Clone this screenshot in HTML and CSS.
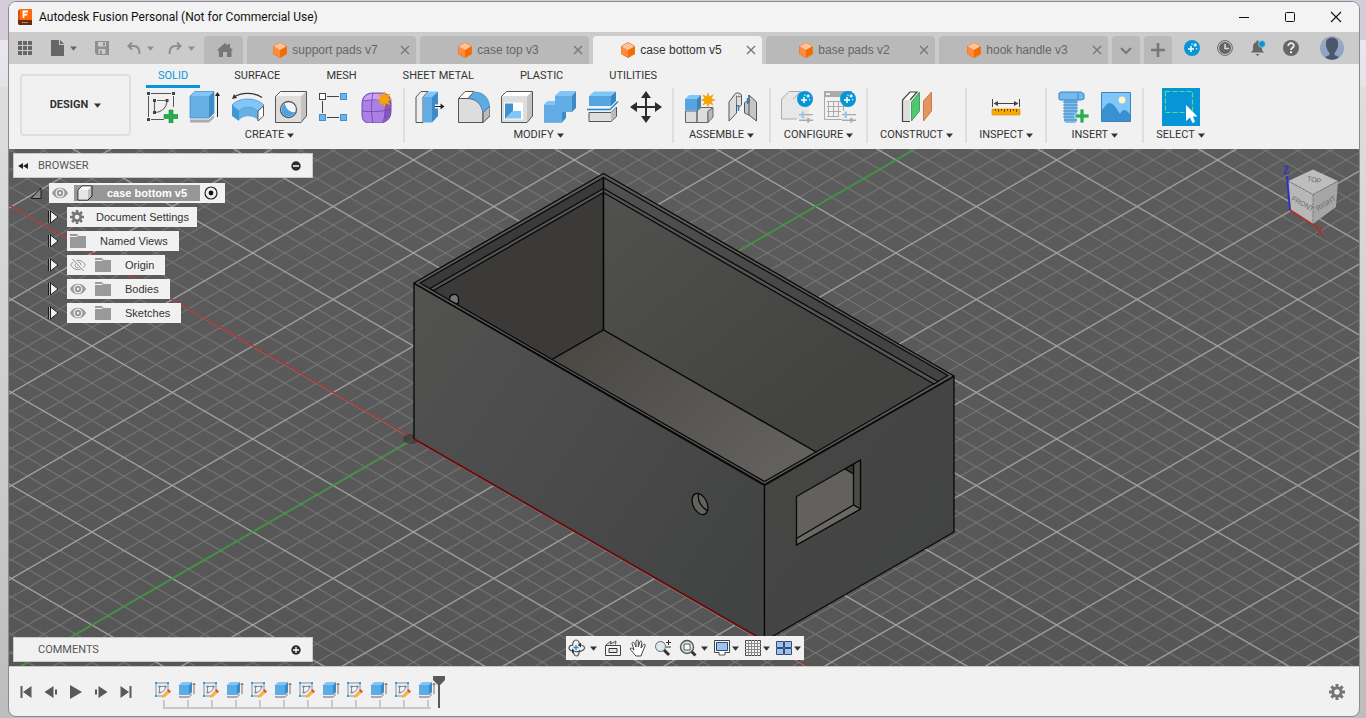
FILE: index.html
```html
<!DOCTYPE html>
<html lang="en">
<head>
<meta charset="utf-8">
<title>Autodesk Fusion Personal</title>
<link rel="stylesheet" href="styles.css">
</head>
<body>
<svg class="defs" aria-hidden="true">
  <symbol id="cube" viewBox="0 0 14 16"><path d="M7 0 14 4 7 8 0 4Z" fill="#ffc49b"/><path d="M0 4 7 8V16L0 12Z" fill="#ff8b3d"/><path d="M14 4 7 8V16L14 12Z" fill="#f76a00"/><path d="M7 .5 13.6 4.2V11.8L7 15.5.4 11.8V4.2Z" fill="none" stroke="#e77a33" stroke-width=".7"/></symbol>
  <symbol id="close" viewBox="0 0 10 10"><path d="M1 1 9 9M9 1 1 9" stroke="currentColor" stroke-width="1.4" fill="none"/></symbol>
  <symbol id="caret" viewBox="0 0 7 5"><path d="M0 .5H7L3.500 4.800Z" fill="currentColor"/></symbol>
  <symbol id="eye" viewBox="0 0 16 12"><path d="M0 6C3-1 13-1 16 6 13 13 3 13 0 6Z" fill="#999"/><circle cx="8" cy="6" r="4.500" fill="#f1f1f1"/><circle cx="8" cy="6" r="3.200" fill="#999"/><circle cx="8" cy="6" r="1.200" fill="#f1f1f1"/></symbol>
  <symbol id="eye-off" viewBox="0 0 16 12"><path d="M.7 6C4-.3 12-.3 15.300 6 12 12.300 4 12.300.7 6Z" fill="none" stroke="#999"/><circle cx="8" cy="6" r="3" fill="none" stroke="#999"/><path d="M3 0 14 12" stroke="#f1f1f1" stroke-width="3"/><path d="M2.500 0 13.500 12" stroke="#888"/></symbol>
  <symbol id="folder" viewBox="0 0 16 14"><path d="M0 0H7L9 2H16V14H0Z" fill="#999"/><path d="M0 2.500H7L8 1.200" stroke="#f1f1f1" fill="none"/></symbol>
  <symbol id="gear" viewBox="0 0 16 16"><g fill="currentColor"><path d="M6.500 0h3v16h-3zM0 6.500h16v3H0z"/><path d="M6.500 0h3v16h-3zM0 6.500h16v3H0z" transform="rotate(45 8 8)"/><circle cx="8" cy="8" r="5.600"/></g><circle cx="8" cy="8" r="2.700" fill="#f1f1f1"/></symbol>
  <symbol id="branch" viewBox="0 0 11 14"><path d="M.5 1V13" stroke="#1a1a1a"/><path d="M1 1H3L10 7 3 13H1Z" fill="#aaa"/><path d="M2.500 1 10 7 2.500 13Z" fill="#f1f1f1" stroke="#1a1a1a"/></symbol>
  <symbol id="t-sketch" viewBox="0 0 18 18"><path d="M2 2H14V13M2 2V15H9" fill="none" stroke="#8a8a8a"/><path d="M5.500 11V5.500H11.500C11.500 9 9 11.500 5.500 11.500" fill="none" stroke="#8a8a8a"/><path d="M1 1h2v2H1zM13 1h2v2h-2zM1 14h2v2H1zM4.500 4.500h2v2h-2zM10.500 4.500h2v2h-2zM4.500 10.500h2v2h-2z" fill="#3d96d8"/><path d="M8 17 9 13.500 13 9.500 15.500 12 11 16Z" fill="#f4b740"/><path d="M13 9.500 14.500 8 17 10.500 15.500 12Z" fill="#ef4848"/></symbol>
  <symbol id="t-extrude" viewBox="0 0 18 18"><path d="M1 4 4 1H14L11 4Z" fill="#80c6fa"/><path d="M1 4H11V14H1Z" fill="#5aabe6"/><path d="M11 4 14 1V11L11 14Z" fill="#3f89c2"/><path d="M1 15H11L14 12V14L11 17H1Z" fill="#aaa"/><path d="M16 3V13M14.700 4 16 2 17.300 4" stroke="#555" stroke-width=".8" fill="none"/></symbol>
  <symbol id="spark" viewBox="0 0 18 18"><path d="M9 0 10.600 5 15.400 2.600 13 7.400 18 9 13 10.600 15.400 15.400 10.600 13 9 18 7.400 13 2.600 15.400 5 10.600 0 9 5 7.400 2.600 2.600 7.400 5Z" fill="#f6a200"/></symbol>
  <symbol id="badge" viewBox="0 0 16 16"><circle cx="8" cy="8" r="8" fill="#0696d7"/><path d="M4 9H10M7 6V12M11.200 3.500V6.500M9.700 5H12.700" stroke="#fff" stroke-width="1.500"/><path d="M7.400 3.500h1.200v1.200H7.400zM12 8h1.200v1.200H12z" fill="#fff"/></symbol>
  <symbol id="sliders" viewBox="0 0 15 12"><path d="M0 3.500H15M0 9.500H15" stroke="#aaa" stroke-width="1.500"/><path d="M4 0V7" stroke="#8ccaf5" stroke-width="2.500"/><path d="M10 7V12" stroke="#aaa" stroke-width="2.500"/></symbol>
</svg>

<div class="window">
  <header class="title-bar">
    <svg class="app-icon" viewBox="0 0 14 16"><path d="M2 0H14V16H2L0 14V2Z" fill="#ff6b0a"/><path d="M0 2 2 0V11H0Z" fill="#d84f00"/><path d="M0 11H14V16H1L0 15Z" fill="#682b10"/><path d="M5.500 9V2.500H10M5.500 5.700H9.300" fill="none" stroke="#fff" stroke-width="1.800"/><path d="M4 13.500H10" stroke="#d9a994" stroke-dasharray="1.500 .6"/></svg>
    <h1>Autodesk Fusion Personal (Not for Commercial Use)</h1>
    <div class="win-controls">
      <button aria-label="Minimize"><svg viewBox="0 0 12 12"><path d="M1 6.500H11" stroke="#111"/></svg></button>
      <button aria-label="Maximize"><svg viewBox="0 0 12 12"><rect x="1.500" y="1.500" width="9" height="9" rx="1" fill="none" stroke="#111"/></svg></button>
      <button aria-label="Close"><svg viewBox="0 0 12 12"><path d="M1 1 11 11M11 1 1 11" stroke="#111" stroke-width="1.100"/></svg></button>
    </div>
  </header>

  <div class="app-bar">
    <div class="quick">
      <button aria-label="Data panel"><svg class="i14" viewBox="0 0 14 14"><path d="M0 0h4v4H0zM5 0h4v4H5zM10 0h4v4h-4zM0 5h4v4H0zM5 5h4v4H5zM10 5h4v4h-4zM0 10h4v4H0zM5 10h4v4H5zM10 10h4v4h-4z" fill="#666"/></svg></button>
      <button aria-label="File"><svg class="i16" viewBox="0 0 16 16"><path d="M1 0H9V5H14V16H1ZM10 0 14 4H10Z" fill="#666"/></svg><svg class="caret"><use href="#caret"/></svg></button>
      <button class="faded" aria-label="Save"><svg class="i14" viewBox="0 0 14 14"><path d="M0 0H14V14H2L0 12Z" fill="#8e8e8e"/><path d="M3 1H11V5.500H3ZM3.500 8H10.500V13H3.500Z" fill="#cbcbcb"/><path d="M8 1.500h2v3H8zM5 9.500h2V13H5z" fill="#8e8e8e"/></svg></button>
      <div class="history">
        <button class="faded" aria-label="Undo"><svg class="i14" viewBox="0 0 14 14"><path d="M5 1.500 1.500 5 5 8.500M2 5H7C11 5 12.500 7.500 12.500 13" fill="none" stroke="#8e8e8e" stroke-width="2"/></svg><svg class="caret"><use href="#caret"/></svg></button>
        <button class="faded" aria-label="Redo"><svg class="i14" viewBox="0 0 14 14"><path d="M9 1.500 12.500 5 9 8.500M12 5H7C3 5 1.500 7.500 1.500 13" fill="none" stroke="#8e8e8e" stroke-width="2"/></svg><svg class="caret"><use href="#caret"/></svg></button>
      </div>
    </div>
    <nav class="docs" aria-label="Documents">
      <button class="doc small home" aria-label="Home"><svg class="i16" viewBox="0 0 16 16"><path d="M0 8 8 1 11 3.600V2H13V5.400L16 8 14.500 8.800V15H10V10H6V15H1.800V8.800Z" fill="#777"/></svg></button>
      <div class="doc"><button class="name"><svg class="cube"><use href="#cube"/></svg>support pads v7</button><button class="x" aria-label="Close support pads"><svg><use href="#close"/></svg></button></div>
      <div class="doc"><button class="name"><svg class="cube"><use href="#cube"/></svg>case top v3</button><button class="x" aria-label="Close case top"><svg><use href="#close"/></svg></button></div>
      <div class="doc current"><button class="name"><svg class="cube"><use href="#cube"/></svg>case bottom v5</button><button class="x" aria-label="Close case bottom"><svg><use href="#close"/></svg></button></div>
      <div class="doc"><button class="name"><svg class="cube"><use href="#cube"/></svg>base pads v2</button><button class="x" aria-label="Close base pads"><svg><use href="#close"/></svg></button></div>
      <div class="doc"><button class="name"><svg class="cube"><use href="#cube"/></svg>hook handle v3</button><button class="x" aria-label="Close hook handle"><svg><use href="#close"/></svg></button></div>
      <button class="doc small" aria-label="More tabs"><svg class="i14" viewBox="0 0 14 14"><path d="M2 5 7 10 12 5" fill="none" stroke="#777" stroke-width="2"/></svg></button>
      <button class="doc small" aria-label="New design"><svg class="i14" viewBox="0 0 14 14"><path d="M0 7H14M7 0V14" stroke="#777" stroke-width="2.600"/></svg></button>
    </nav>
    <div class="status">
      <button aria-label="Extensions"><svg class="i16"><use href="#badge"/></svg></button>
      <button aria-label="Job status"><svg class="i16" viewBox="0 0 16 16"><circle cx="8" cy="8" r="7.400" fill="#cbcbcb" stroke="#666"/><circle cx="8" cy="8" r="6" fill="#666"/><path d="M8 4V8.500H12" fill="none" stroke="#ddd" stroke-width="1.500"/></svg></button>
      <button aria-label="Notifications"><svg class="i16" viewBox="0 0 16 16"><path d="M6.500.5h2V2C11 2.500 12 4.500 12 7V10L14 12.500H1L3 10V7C3 4.500 4 2.500 6.500 2ZM5.500 14H9.500L7.500 16Z" fill="#666"/><circle cx="12" cy="4" r="3.400" fill="#0696d7" stroke="#cbcbcb" stroke-width=".7"/></svg></button>
      <button aria-label="Help"><svg class="i16" viewBox="0 0 16 16"><circle cx="8" cy="8" r="8" fill="#666"/><path d="M5.200 6C5.200 2 11 2.500 10.800 5.900 10.600 7.700 8 7.800 8 10" fill="none" stroke="#eee" stroke-width="1.800"/><path d="M7 11.200h2v2H7z" fill="#eee"/></svg></button>
      <button class="account" aria-label="Account"><svg class="i24" viewBox="0 0 24 24"><defs><linearGradient id="av" x2="0" y2="1"><stop stop-color="#9dabbf"/><stop offset="1" stop-color="#8ba1c6"/></linearGradient></defs><circle cx="12" cy="12" r="12" fill="url(#av)"/><path d="M6 6C7 0 17 0 18 6V11L16 15 14.500 17V19L19 21C15 24.700 9 24.700 5 21L9.500 19V17L7.500 14.500 6 10Z" fill="#4b586b"/></svg></button>
    </div>
  </div>

  <div class="ribbon">
    <button class="workspace">DESIGN<svg class="caret"><use href="#caret"/></svg></button>
    <div class="tools">
      <nav class="ribbon-tabs" aria-label="Toolbar tabs">
        <button class="on">SOLID</button><button>SURFACE</button><button>MESH</button><button>SHEET METAL</button><button>PLASTIC</button><button>UTILITIES</button>
      </nav>
      <div class="groups">
        <section class="group">
          <div class="icons">
            <button aria-label="Create sketch"><svg viewBox="0 0 32 32"><path d="M5 2.500H25M2.500 5V26M27.500 5V16M5 28.500H18" stroke="#555" fill="none"/><path d="M8.500 11V20M11 9.500H19M21 11C20 17 16 20.500 10 21.500" fill="none" stroke="#666" stroke-width="1.200"/><path d="M1 1h3v3H1zM26 1h3v3h-3zM1 27h3v3H1zM7 8h3v3H7zM19.500 8h3v3h-3zM7 20h3v3H7z" fill="#444"/><path d="M23 19h4v4.500h5v4h-5V32h-4v-4.500h-5v-4h5Z" fill="#24b04c" stroke="#168a36" stroke-width=".6"/></svg></button>
            <button aria-label="Extrude"><svg viewBox="0 0 32 32"><path d="M1 5 6 .5H25L20 5Z" fill="#80c6fa"/><path d="M1 5H20V27H1Z" fill="#67b0e5"/><path d="M20 5 25 .5V22L20 27Z" fill="#3d8bc8"/><path d="M1 5 6 .5H25V22L20 27H1Z" fill="none" stroke="#3c86be" stroke-width=".7"/><path d="M1 28.500H20L25 24V27L20 31.500H1Z" fill="#aaa"/><path d="M28.500 26V4" stroke="#222"/><path d="M26 5 28.500 1 31 5Z" fill="#222"/></svg></button>
            <button aria-label="Revolve"><svg viewBox="0 0 32 32"><path d="M2 6C9 1 22 1 30 6.500" fill="none" stroke="#333" stroke-width="1.300"/><path d="M0 8 2 3 5 7Z" fill="#333"/><path d="M0 14C7 6 24 6 32 14L26 20C20 15 12 15 7 20Z" fill="#80c6fa"/><path d="M0 14 7 20V30L0 25Z" fill="#4097d5"/><path d="M7 20C12 15 20 15 26 20V29C20 24 12 24 7 29Z" fill="#67b0e5"/><path d="M0 14C7 6 24 6 32 14L26 20C20 15 12 15 7 20Z" fill="none" stroke="#3c8fca" stroke-width=".7"/><path d="M26 20 31.500 15V25L26 30Z" fill="#fff" stroke="#555"/></svg></button>
            <button aria-label="Hole"><svg viewBox="0 0 32 32"><path d="M.5 5.500 5.500.5H31.500V25L26 31.500H.5Z" fill="#c3c3c3"/><path d="M.5 5.500 5.500.5H31L26 5.500Z" fill="#f5f5f5"/><path d="M.5 5.500H26V31.500H.5Z" fill="#ddd"/><path d="M.5 5.500 5.500.5H31.500V25L26 31.500H.5Z" fill="none" stroke="#555"/><circle cx="13.500" cy="18.500" r="8" fill="#f5f5f5" stroke="#555" stroke-width="1.300"/><path d="M10 12.500A7 7 0 1 0 20 21C15 22 10 17 10 12.500Z" fill="#4da2df"/></svg></button>
            <button aria-label="Pattern"><svg viewBox="0 0 32 32"><path d="M9 5.500H21M4.500 10V22M9 26.500H21" stroke="#444"/><rect x="1.500" y="2.500" width="6" height="6" fill="#fff" stroke="#444"/><g fill="#6bb5ee" stroke="#4391cc"><rect x="22.500" y="2.500" width="6" height="6"/><rect x="1.500" y="23.500" width="6" height="6"/><rect x="22.500" y="23.500" width="6" height="6"/></g></svg></button>
            <button aria-label="Create form"><svg viewBox="0 0 32 32"><path d="M1 13C1 5 6 2 12 2H20C27 2 30 6 30 12V20C30 28 25 32 18 32H9C3 32 1 29 1 23Z" fill="#ab80e6"/><path d="M2 10C4 4 10 2 18 2.500 24 3 26 4 24 8 19 11 7 8 2 10Z" fill="#c8a5f4"/><path d="M24 8C25 17 24 25 21 31 27 30 30 25 30 18V12C29 6 27 4 24 8Z" fill="#8558bd"/><path d="M1 20C8 21 21 21 30 18M12 2C10 9 10 24 12 32M24 7V27M2 10C10 8 20 10 25 7" fill="none" stroke="#6e42a5" stroke-width=".8"/><path d="M1 13C1 5 6 2 12 2H20C27 2 30 6 30 12V20C30 28 25 32 18 32H9C3 32 1 29 1 23Z" fill="none" stroke="#7648ae"/><use href="#spark" x="15" y="0" width="17" height="17"/></svg></button>
          </div>
          <button class="label">CREATE<svg class="caret"><use href="#caret"/></svg></button>
        </section>
        <section class="group">
          <div class="icons">
            <button aria-label="Press pull"><svg viewBox="0 0 32 32"><path d="M1 6 6 .5H13L8 6V31.500H1Z" fill="#eee" stroke="#555"/><path d="M8 6 14 .5H23L17 6Z" fill="#80c6fa"/><path d="M8 6H17V31.500H8Z" fill="#62ade4"/><path d="M17 6 23 .5V25L17 31.500Z" fill="#3d8bc8"/><path d="M20 15.500H28" stroke="#fff" stroke-width="4"/><path d="M20 15.500H28" stroke="#222"/><path d="M25.500 12.500 29.500 15.500 25.500 18.500Z" fill="#222"/></svg></button>
            <button aria-label="Fillet"><svg viewBox="0 0 32 32"><path d="M.5 7.500 7 .5H16L10 7.500Z" fill="#fff" stroke="#555"/><path d="M.5 7.500H9C19 7.500 24 14 25 21.500V31.500H.5Z" fill="#ddd" stroke="#555"/><path d="M25 21.500 32 15V25L25 31.500Z" fill="#bbb" stroke="#555"/><path d="M11 7 17 1C25 1 31 7 31.500 15L25 21.500C23 13 18 8 11 7Z" fill="#5eaae3" stroke="#3985c0" stroke-width=".6"/></svg></button>
            <button aria-label="Shell"><svg viewBox="0 0 32 32"><path d="M.5 5.500 5.500.5H31.500V25L26 31.500H.5Z" fill="#c3c3c3"/><path d="M.5 5.500 5.500.5H31L26 5.500Z" fill="#fff"/><path d="M.5 5.500H26V31.500H.5Z" fill="#ddd"/><path d="M.5 5.500 5.500.5H31.500V25L26 31.500H.5Z" fill="none" stroke="#555"/><path d="M3 11.500H22V28.500H3Z" fill="#fff"/><path d="M4 12.500H12V20L4 28Z" fill="#3f91cf"/><path d="M12 20H20V27.500H4.500Z" fill="#80c6fa"/></svg></button>
            <button aria-label="Combine"><svg viewBox="0 0 32 32"><path d="M0 14 4 10H11V5L16 .5H32V17L28 21H22V27L18 31.500H0Z" fill="#3f8ac4"/><path d="M11 5 16 .5H32L28 5ZM0 14 4 10H11V14Z" fill="#80c6fa"/><path d="M11 5H28V21H18V31.500H0V14H11Z" fill="#62ade4"/></svg></button>
            <button aria-label="Split body"><svg viewBox="0 0 32 32"><path d="M2 5 7 .5H29L24 5Z" fill="#80c6fa"/><path d="M2 5H24V15H2Z" fill="#55a4df"/><path d="M24 5 29 .5V10L24 15Z" fill="#3d84ba"/><path d="M0 18.500H23L31 10.500" stroke="#1787d5" stroke-width="1.300" fill="none"/><path d="M2 21.500H24L29.500 16V25.500L24 30.500H2Z" fill="#ddd" stroke="#555"/><path d="M24 22 29 17V25L24 30Z" fill="#bbb"/></svg></button>
            <button aria-label="Move"><svg viewBox="0 0 32 32"><path d="M16 4V28M4 16H28" stroke="#2d2d2d" stroke-width="2"/><path d="M11 7 16 0 21 7ZM11 25 16 32 21 25ZM7 11 0 16 7 21ZM25 11 32 16 25 21Z" fill="#2d2d2d"/></svg></button>
          </div>
          <button class="label">MODIFY<svg class="caret"><use href="#caret"/></svg></button>
        </section>
        <section class="group">
          <div class="icons">
            <button aria-label="New component"><svg viewBox="0 0 32 32"><path d="M1.500 20H13V31.500H1.500ZM13 20 17 16.500H29L24 20.500V31.500H13Z" fill="#ddd" stroke="#666"/><path d="M24 20.500 29 16.500V26L24 31.500Z" fill="#bbb" stroke="#666"/><path d="M1 8 5 4H17L13 8Z" fill="#80c6fa"/><path d="M1 8H13V19.500H1Z" fill="#55a4df"/><path d="M13 8 17 4V16L13 19.500Z" fill="#3d84ba"/><use href="#spark" x="16" y="1" width="16" height="16"/></svg></button>
            <button aria-label="Joint"><svg viewBox="0 0 32 32"><path d="M2 11 8 3C9 1 15 2 14.500 5V14L12 16 9.500 14V22L2 30Z" fill="#ddd" stroke="#555"/><path d="M9.500 14V5C11 6 13 6 14.500 5" fill="none" stroke="#777"/><path d="M22 4 29.500 11V30L22 24 17.500 22V12C18 10 21 10 22 12Z" fill="#c5c5c5" stroke="#555"/><path d="M22 4V24" stroke="#555"/><path d="M11.500 14V20M20.500 7V13" stroke="#1688dc" stroke-width="1.500"/></svg></button>
          </div>
          <button class="label">ASSEMBLE<svg class="caret"><use href="#caret"/></svg></button>
        </section>
        <section class="group">
          <div class="icons">
            <button aria-label="Configure"><svg viewBox="0 0 32 32"><path d="M.5 8 8 .5H25L28 4V28H.5Z" fill="#e7e7e7"/><path d="M.5 28V8L8 .5H20L12 8M.5 28H16" fill="none" stroke="#aaa"/><use href="#badge" x="16" y="0" width="16" height="16"/><use href="#sliders" x="18" y="20" width="14" height="12"/></svg></button>
            <button aria-label="Configuration table"><svg viewBox="0 0 32 32"><path d="M0 0H28V6H0Z" fill="#aaa"/><path d="M.5 6V28.500H18M3 10.500H22M3 15.500H22M3 20.500H17M3 25.500H15M4.500 10V26M9.500 10V26M14.500 10V26M19.500 10V20" fill="none" stroke="#aaa"/><path d="M2 2h4v2H2z" fill="#eee"/><use href="#badge" x="16" y="0" width="16" height="16"/><use href="#sliders" x="18" y="20" width="14" height="12"/></svg></button>
          </div>
          <button class="label">CONFIGURE<svg class="caret"><use href="#caret"/></svg></button>
        </section>
        <section class="group">
          <div class="icons">
            <button aria-label="Offset plane"><svg viewBox="0 0 32 32"><path d="M1.500 9H9V30.500H1.500Z" fill="#ddd"/><path d="M1.500 9 9 1H17L9 9Z" fill="#fff"/><path d="M9 30.500H1.500V9L9 1H16L9 9" fill="none" stroke="#444" stroke-width="1.200"/><path d="M10.500 11 18.500 1V20L10.500 30Z" fill="#51c572" stroke="#3ba85b"/><path d="M22.500 10 30.500 1V20L22.500 30Z" fill="#e5955f" stroke="#cc7945"/></svg></button>
          </div>
          <button class="label">CONSTRUCT<svg class="caret"><use href="#caret"/></svg></button>
        </section>
        <section class="group">
          <div class="icons">
            <button aria-label="Measure"><svg viewBox="0 0 32 32"><path d="M2.500 8V16M29.500 8V16M5 12.500H27" stroke="#444"/><path d="M3.500 12.500 8 10V15ZM28.500 12.500 24 10V15Z" fill="#444"/><path d="M2 18H30V24H2Z" fill="#faa900" stroke="#d98d00" stroke-width=".6"/><path d="M5.500 18v2M8.500 18v3M11.500 18v2M14.500 18v3M17.500 18v2M20.500 18v3M23.500 18v2M26.500 18v3" stroke="#765000"/></svg></button>
          </div>
          <button class="label">INSPECT<svg class="caret"><use href="#caret"/></svg></button>
        </section>
        <section class="group">
          <div class="icons">
            <button aria-label="Insert fastener"><svg viewBox="0 0 32 32"><path d="M7 8H20V30L18 32H9L7 30Z" fill="#80bdea"/><path d="M6 11H21M6 14H21M6 17H21M6 20H21M6 23H21M6 26H21M7 29H20" stroke="#408cc8"/><path d="M2 2 4 1H24L27 3V8L24 9H3L2 8Z" fill="#75b9ed" stroke="#3786c3"/><path d="M21 2V9" stroke="#3786c3"/><path d="M23 18h4v5h5v4h-5v5h-4v-5h-5v-4h5Z" fill="#24b04c" stroke="#f1f1f1" stroke-width=".8"/></svg></button>
            <button aria-label="Insert image"><svg viewBox="0 0 32 32"><path d="M1.500 1.500H30.500V30.500H1.500Z" fill="#80c6fa"/><path d="M1.500 20C5 15 7 12 10 12 15 13 18 20 20 23 23 17 26 18 30.500 24V30.500H1.500Z" fill="#3991d2"/><circle cx="22" cy="9" r="3.400" fill="#fff5c2"/><path d="M1.500 1.500H30.500V30.500H1.500Z" fill="none" stroke="#3c83b8"/></svg></button>
          </div>
          <button class="label">INSERT<svg class="caret"><use href="#caret"/></svg></button>
        </section>
        <section class="group">
          <div class="icons">
            <button class="select-tool" aria-label="Select"><svg viewBox="0 0 38 38"><path d="M0 0H38V38H0Z" fill="#0696d7"/><path d="M3.500 3.500H30.500V24.500H3.500Z" fill="none" stroke="#57dc8a" stroke-width="1.200" stroke-dasharray="5 2"/><path d="M24 17V33L28 29.500 30.500 35 33 34 31 28.500H35.500Z" fill="#fff"/></svg></button>
          </div>
          <button class="label">SELECT<svg class="caret"><use href="#caret"/></svg></button>
        </section>
      </div>
    </div>
  </div>

  <main class="viewport">
    <svg class="scene" viewBox="9 149 1350 517" preserveAspectRatio="xMidYMid slice" role="img" aria-label="Open case model on a grid">
      <defs>
        <pattern id="grid" x="413.500" y="439" width="160.800" height="93" patternUnits="userSpaceOnUse">
          <path d="M0-74.400 160.800 18.600M0-55.800 160.800 37.200M0-37.200 160.800 55.800M0-18.600 160.800 74.400M0 18.600 160.800 111.600M0 37.200 160.800 130.200M0 55.800 160.800 148.800M0 74.400 160.800 167.400M0 18.600 160.800-74.400M0 37.200 160.800-55.800M0 55.800 160.800-37.200M0 74.400 160.800-18.600M0 111.600 160.800 18.600M0 130.200 160.800 37.200M0 148.800 160.800 55.800M0 167.400 160.800 74.400" stroke="#767776" fill="none"/>
          <path d="M-2-1.150 162.800 94.150M-2 94.150 162.800-1.150" stroke="#a6a6a6" stroke-width="1.200" fill="none"/>
        </pattern>
        <linearGradient id="bg" x2="0" y2="1"><stop stop-color="#5b5c5b"/><stop offset="1" stop-color="#555655"/></linearGradient>
        <linearGradient id="front" x2="1" y2=".7"><stop stop-color="#525251"/><stop offset="1" stop-color="#424443"/></linearGradient>
        <linearGradient id="side" x2="1" y2="1"><stop stop-color="#464745"/><stop offset="1" stop-color="#414342"/></linearGradient>
        <linearGradient id="inner" x2="1" y2="1"><stop stop-color="#515150"/><stop offset=".7" stop-color="#434341"/></linearGradient>
        <linearGradient id="floor" x2="1" y2=".6"><stop stop-color="#484641"/><stop offset="1" stop-color="#62605d"/></linearGradient>
      </defs>
      <path d="M9 149H1359V666H9Z" fill="url(#bg)"/>
      <path d="M9 149H1359V666H9Z" fill="url(#grid)"/>
      <path d="M9 205 414 439M764 641 807 666" stroke="#a82828" stroke-width="1.200"/>
      <path d="M20 666.500 915 149" stroke="#229c22" stroke-width="1.200"/>
      <ellipse cx="411" cy="439" rx="8" ry="5" fill="#333" opacity=".6"/>
      <g stroke="#080808" stroke-width="1.300" stroke-linejoin="round">
        <path d="M414 283 603.500 173.500 954 376 764.500 484.500Z" fill="#5a5b59"/>
        <path d="M420 283 603.500 177.500V330L552 359.500Z" fill="#3b3a38"/>
        <path d="M603.500 177.500 948 375.500 816 452 603.500 330Z" fill="url(#inner)"/>
        <path d="M552 359.500 603.500 330 816 452 764.500 481.500Z" fill="url(#floor)"/>
        <path d="M430 288.500 603.500 188.500 938 381.500 934 384 603.500 192.500 433.500 290.500Z" fill="#555"/>
        <path d="M603.500 177V330" fill="none"/>
        <path d="M449.500 300C449 294 457 292 458.500 298V303.500L455.500 303.500Z" fill="#777"/>
        <path d="M414 283.500 764.500 485.500V641L414 439Z" fill="url(#front)"/>
        <path d="M764.500 485.500 954 376.500V532L764.500 641Z" fill="url(#side)"/>
        <path d="M796.500 496.500 860.500 460V509L796.500 545Z" fill="#62615e"/>
        <path d="M853.500 464 860.500 460V509L853.500 505Z" fill="#4a4a48"/>
        <path d="M845 469 853.500 464V474Z" fill="#343432"/>
        <path d="M796.500 538.500 853.500 505 860.500 509 796.500 545Z" fill="#6b6965"/>
        <ellipse cx="700" cy="504" rx="7" ry="11.200" transform="rotate(-25 700 504)" fill="#63625f"/>
        <path d="M698.500 494C697 501 702 508 708 511" fill="none"/>
      </g>
      <path d="M414 439 764.500 641" stroke="#780909" stroke-width="1.600"/>
      <g class="view-cube">
        <path d="M1288 180 1313 169.500 1338 181 1336 209 1313 224 1291 210Z" fill="#444" opacity=".3"/>
        <path d="M1288 181 1313 169.500 1338 181 1313 194.500Z" fill="#bdbdbd"/>
        <path d="M1288 181 1313 194.500V224L1290 210Z" fill="#b7b7b7"/>
        <path d="M1338 181 1313 194.500V224L1336 207Z" fill="#a6a6a6"/>
        <path d="M1288 181 1313 194.500 1338 181M1313 194.500V224" fill="none" stroke="#777" stroke-dasharray="3 1"/>
        <path d="M1287 176 1290 210" stroke="#3030c0" stroke-width="2"/>
        <path d="M1290 210 1318 228" stroke="#a33" stroke-width="2"/>
        <text x="1307" y="182" transform="rotate(12 1313 180)">TOP</text>
        <text x="1291" y="200" transform="rotate(29 1291 200)">FRONT</text>
        <text x="1318" y="211" transform="rotate(-32 1318 211)">RIGHT</text>
        <text class="axis z" x="1283" y="174">Z</text>
        <text class="axis xx" x="1317" y="235">X</text>
      </g>
    </svg>

    <aside class="browser">
      <div class="panel">
        <button aria-label="Collapse browser"><svg class="i10" viewBox="0 0 10 10"><path d="M5 2V8L0 5ZM10 2V8L5 5Z" fill="#222"/></svg></button>
        <h2>BROWSER</h2>
        <button aria-label="Panel options"><svg class="i10" viewBox="0 0 10 10"><circle cx="5" cy="5" r="4.700" fill="#2b2b2b"/><path d="M2 5H8" stroke="#fff" stroke-width="1.500"/></svg></button>
      </div>
      <ul class="tree">
        <li class="root"><button aria-label="Collapse case bottom"><svg class="i12" viewBox="0 0 12 12"><path d="M1 11.500H11V1Z" fill="#888" stroke="#1a1a1a"/></svg></button>
          <div class="item"><svg class="eye"><use href="#eye"/></svg><span class="chosen"><svg class="i16" viewBox="0 0 16 16"><path d="M1 5 5 1H15V11L11 15H1Z" fill="#bbb" stroke="#222"/><path d="M1.500 5 5 1.500H14.500L11 5Z" fill="#fff"/><path d="M1.500 5H11V14.500H1.500Z" fill="#e3e6ea"/></svg>case bottom v5</span><svg class="i14" viewBox="0 0 14 14"><circle cx="7" cy="7" r="6" fill="none" stroke="#222" stroke-width="1.200"/><circle cx="7" cy="7" r="2.400" fill="#111"/></svg></div></li>
        <li><button aria-label="Expand Document Settings"><svg class="branch"><use href="#branch"/></svg></button><div class="item"><svg class="i14 gear"><use href="#gear"/></svg><span class="doc-label">Document Settings</span></div></li>
        <li><button aria-label="Expand Named Views"><svg class="branch"><use href="#branch"/></svg></button><div class="item"><svg class="folder"><use href="#folder"/></svg><span>Named Views</span></div></li>
        <li><button aria-label="Expand Origin"><svg class="branch"><use href="#branch"/></svg></button><div class="item"><svg class="eye"><use href="#eye-off"/></svg><svg class="folder"><use href="#folder"/></svg><span>Origin</span></div></li>
        <li><button aria-label="Expand Bodies"><svg class="branch"><use href="#branch"/></svg></button><div class="item"><svg class="eye"><use href="#eye"/></svg><svg class="folder"><use href="#folder"/></svg><span>Bodies</span></div></li>
        <li><button aria-label="Expand Sketches"><svg class="branch"><use href="#branch"/></svg></button><div class="item"><svg class="eye"><use href="#eye"/></svg><svg class="folder"><use href="#folder"/></svg><span>Sketches</span></div></li>
      </ul>
    </aside>

    <div class="panel comments">
      <h2>COMMENTS</h2>
      <button aria-label="Add comment"><svg class="i10" viewBox="0 0 10 10"><circle cx="5" cy="5" r="4.700" fill="#2b2b2b"/><path d="M2 5H8M5 2V8" stroke="#fff" stroke-width="1.300"/></svg></button>
    </div>

    <div class="nav-bar">
      <button class="drop" aria-label="Orbit"><svg class="i18" viewBox="0 0 18 18"><path d="M4.500 7C4.500-1 11.500-1 11.500 7M5 11C6 19 11 19 11.500 11" fill="none" stroke="#555" stroke-width="1.200"/><path d="M4 6C0 7 0 11 4 12M7 12.500C11 13 15.500 12 16.500 9.500 17 7.500 15 6.500 13 6" fill="none" stroke="#555" stroke-width="1.200"/><path d="M13 3.500 10 6 13 8.500ZM4 9.500 7 12 4 14.500Z" fill="#333"/><path d="M5.500 8.500H10.500M8 6V11" stroke="#2d83d6" stroke-width="1.300"/></svg><svg class="caret"><use href="#caret"/></svg></button>
      <button aria-label="Look at"><svg class="i18" viewBox="0 0 18 18"><path d="M1.500 6.500H16.500V16.500H1.500Z" fill="#f4f4f4" stroke="#444"/><path d="M2 6 7 2 6.500 5 12 2 11.500 5.500" fill="#ddd" stroke="#555"/><path d="M5 9.500H13V13.500H5Z" fill="#d9e6e6" stroke="#333"/></svg></button>
      <button aria-label="Pan"><svg class="i18" viewBox="0 0 18 18"><path d="M7 17C4 14 3 12 1 10 1.500 8.500 3 9 5 11L3 4.500C3 3 5 3 5.500 4.500L7 8V2C7.500.7 9 .7 9.300 2V8L11 2.500C12 1.500 13 2.500 12.800 3.500L12 9 14.500 5.500C15.500 4.500 16.800 5.500 16 7L13.500 13 12 17Z" fill="#fff" stroke="#444"/></svg></button>
      <button aria-label="Zoom"><svg class="i18" viewBox="0 0 18 18"><path d="M9 10 15 16" stroke="#333" stroke-width="3"/><circle cx="6.500" cy="7.500" r="5" fill="#d9e9ec" stroke="#667"/><path d="M12 3.500H17M14.500 1V6M12 8H17" stroke="#333"/></svg></button>
      <button class="drop" aria-label="Fit"><svg class="i18" viewBox="0 0 18 18"><path d="M11 11 16.500 16.500" stroke="#333" stroke-width="3"/><circle cx="8" cy="8" r="6.500" fill="#d9e9ec" stroke="#555" stroke-width="1.400"/><path d="M5 5H11V11H5Z" fill="#fff" stroke="#555"/></svg><svg class="caret"><use href="#caret"/></svg></button>
      <button class="drop tight" aria-label="Display settings"><svg class="i18" viewBox="0 0 18 18"><path d="M1.500 1.500H16.500V13.500H1.500Z" fill="#f8f8f8" stroke="#444"/><path d="M3.500 3.500H14.500V11.500H3.500Z" fill="#9fc3ec" stroke="#2c4b7f"/><path d="M6 13V16H12V13" fill="#fff" stroke="#555"/></svg><svg class="caret"><use href="#caret"/></svg></button>
      <button class="drop tight" aria-label="Grid and snaps"><svg class="i18" viewBox="0 0 18 18"><path d="M1.500 1.500H16.500V16.500H1.500Z" fill="#f4f4f6" stroke="#444"/><path d="M4.500 1V17M7.500 1V17M10.500 1V17M13.500 1V17M1 4.500H17M1 7.500H17M1 10.500H17M1 13.500H17" stroke="#88888c"/></svg><svg class="caret"><use href="#caret"/></svg></button>
      <button class="drop tight" aria-label="Viewports"><svg class="i18" viewBox="0 0 18 18"><path d="M1.500 2.500H8.500V8.500H1.500ZM9.500 2.500H16.500V8.500H9.500ZM1.500 9.500H8.500V15.500H1.500ZM9.500 9.500H16.500V15.500H9.500Z" fill="#a9c8ee" stroke="#2c4b7f"/><path d="M4 4.500h2.500v2H4zM12 4.500h2.500v2H12zM4 11.500h2.500v2H4zM12 11.500h2.500v2H12z" fill="#c9dcf5" stroke="#7597c3" stroke-width=".5"/></svg><svg class="caret"><use href="#caret"/></svg></button>
    </div>
  </main>

  <footer class="timeline">
    <div class="playback">
      <button aria-label="Go to start"><svg class="i14" viewBox="0 0 14 14"><path d="M1.500 1h2v12h-2zM12.500 1V13L4 7Z" fill="#595959"/></svg></button>
      <button aria-label="Step back"><svg class="i14" viewBox="0 0 14 14"><path d="M9.500 1V13L.5 7ZM11 4.500h2v5h-2z" fill="#595959"/></svg></button>
      <button aria-label="Play"><svg class="i14" viewBox="0 0 14 14"><path d="M1 0 13 7 1 14Z" fill="#595959"/></svg></button>
      <button aria-label="Step forward"><svg class="i14" viewBox="0 0 14 14"><path d="M4.500 1V13L13.500 7ZM1 4.500h2v5H1z" fill="#595959"/></svg></button>
      <button aria-label="Go to end"><svg class="i14" viewBox="0 0 14 14"><path d="M10.500 1h2v12h-2zM1.500 1V13L10 7Z" fill="#595959"/></svg></button>
    </div>
    <div class="features">
      <button aria-label="Sketch 1"><svg class="i18"><use href="#t-sketch"/></svg></button>
      <button aria-label="Extrude 1"><svg class="i18"><use href="#t-extrude"/></svg></button>
      <button aria-label="Sketch 2"><svg class="i18"><use href="#t-sketch"/></svg></button>
      <button aria-label="Extrude 2"><svg class="i18"><use href="#t-extrude"/></svg></button>
      <button aria-label="Sketch 3"><svg class="i18"><use href="#t-sketch"/></svg></button>
      <button aria-label="Extrude 3"><svg class="i18"><use href="#t-extrude"/></svg></button>
      <button aria-label="Sketch 4"><svg class="i18"><use href="#t-sketch"/></svg></button>
      <button aria-label="Extrude 4"><svg class="i18"><use href="#t-extrude"/></svg></button>
      <button aria-label="Sketch 5"><svg class="i18"><use href="#t-sketch"/></svg></button>
      <button aria-label="Extrude 5"><svg class="i18"><use href="#t-extrude"/></svg></button>
      <button aria-label="Sketch 6"><svg class="i18"><use href="#t-sketch"/></svg></button>
      <button aria-label="Extrude 6"><svg class="i18"><use href="#t-extrude"/></svg></button>
      <svg class="marker" viewBox="0 0 12 32"><path d="M0 0H12V4L7 9V32H5V9L0 4Z" fill="#595959"/></svg>
    </div>
    <button class="settings" aria-label="Timeline settings"><svg class="i16 gear"><use href="#gear"/></svg></button>
  </footer>
</div>
</body>
</html>
```
FILE: styles.css
```css
* { box-sizing: border-box; }
html, body { height: 100%; }
body {
  margin: 0;
  padding: 1px 6px 1px 8px;
  overflow: hidden;
  background: linear-gradient(#d6cddb 0, #d6cddb 40px, #eae6ed 40px, #e6e3e8 86px, #dedede 87px, #bdbdbd 100%);
  font: 11px/16px "Liberation Sans", Arial, sans-serif;
  color: #333;
}
h1, h2, ul { margin: 0; padding: 0; font-weight: 400; }
ul { list-style: none; }
svg { display: block; flex: none; }
button {
  display: flex;
  align-items: center;
  justify-content: center;
  padding: 0;
  border: 0;
  background: none;
  color: inherit;
  font: inherit;
}
.defs { position: absolute; width: 0; height: 0; }
.i10 { width: 10px; height: 10px; }
.i12 { width: 12px; height: 12px; }
.i14 { width: 14px; height: 14px; }
.i16 { width: 16px; height: 16px; }
.i18 { width: 18px; height: 18px; }
.i24 { width: 24px; height: 24px; }
.caret { width: 7px; height: 5px; }
.gear { color: #757575; }

.window {
  display: flex;
  flex-direction: column;
  height: 100%;
  overflow: hidden;
  border: 1px solid #8d898f;
  border-radius: 8px;
  background: #f1f1f1;
}

.title-bar { display: flex; align-items: center; height: 30px; padding: 0 17px 0 9px; background: #f3f3f3; }
.app-icon { width: 14px; height: 16px; }
.title-bar h1 { flex: 1; margin-left: 7px; font: 12px/16px Roboto, "Open Sans", sans-serif; color: #111; white-space: nowrap; }
.win-controls { display: flex; gap: 34px; }
.win-controls svg { width: 12px; height: 12px; }

.app-bar { display: flex; height: 32px; background: #cbcbcb; }
.quick { display: flex; flex: none; align-items: center; gap: 18px; width: 195px; padding-left: 9px; color: #666; }
.quick button { gap: 4px; }
.quick .faded { color: #8e8e8e; }
.history { display: flex; gap: 14px; }
.history button { gap: 6px; }
.docs { display: flex; flex: 1; gap: 4px; min-width: 0; padding-top: 4px; }
.doc {
  display: flex;
  flex: 0 1 169px;
  align-items: center;
  min-width: 0;
  padding: 0 6px 0 4px;
  border-radius: 4px 4px 0 0;
  background: #b9b9b9;
  color: #666;
}
.doc.small { flex: 0 0 28px; padding: 0; }
.doc.home { flex-basis: 39px; padding-left: 2px; }
.doc.current { background: #f1f1f1; color: #333; }
.name { flex: 1; gap: 5px; min-width: 0; font-size: 12px; white-space: nowrap; }
.cube { width: 14px; height: 16px; }
.x { color: #777; }
.x svg { width: 10px; height: 10px; }
.status { display: flex; flex: none; align-items: center; gap: 17px; padding-right: 15px; }
.account { margin-left: 4px; }

.ribbon { display: flex; gap: 15px; height: 85px; padding: 0 12px 0 11px; font-family: Roboto, "Liberation Sans", sans-serif; }
.workspace {
  flex: none;
  align-self: flex-start;
  gap: 6px;
  width: 111px;
  height: 62px;
  margin-top: 10px;
  border: 2px solid #dedede;
  border-radius: 4px;
  font-weight: 700;
}
.tools { min-width: 0; }
.ribbon-tabs { display: flex; gap: 22px; height: 24px; }
.ribbon-tabs button { padding: 0 12px; border-bottom: 3px solid transparent; border-top: 2px solid transparent; white-space: nowrap; }
.ribbon-tabs .on { border-bottom-color: #0696d7; color: #0696d7; }
.groups { display: flex; }
.group { display: flex; flex: none; flex-direction: column; align-items: center; padding: 0 10px; }
.group + .group { border-left: 2px solid #dedede; }
.group:first-child { padding-left: 0; }
.icons { display: flex; align-items: center; gap: 11px; height: 38px; }
.icons svg { width: 32px; height: 32px; }
.icons .select-tool svg { width: 38px; height: 38px; }
.label { gap: 3px; padding: 1px 2px 0; white-space: nowrap; }

.viewport { position: relative; flex: 1; min-height: 0; background: #595a59; }
.scene { width: 100%; height: 100%; }
.view-cube text { font: 7px "Liberation Sans", sans-serif; fill: #666; }
.view-cube .axis { font-size: 10px; font-weight: 700; }
.view-cube .z { fill: #3333b5; }
.view-cube .xx { fill: #b03030; }

.browser { position: absolute; top: 4px; left: 4px; width: 300px; }
.panel {
  display: flex;
  align-items: center;
  height: 25px;
  padding: 0 11px 0 4px;
  border: 1px solid #c8c8c8;
  background: #f1f1f1;
  font-family: Roboto, "Liberation Sans", sans-serif;
}
.panel h2 { flex: 1; margin-left: 10px; font-size: 11px; color: #555; }
.comments { position: absolute; left: 4px; bottom: 4px; width: 300px; }
.comments h2 { margin-left: 20px; }
.tree { display: grid; gap: 4px; margin-top: 5px; }
.tree li { display: flex; align-items: center; gap: 8px; height: 20px; padding-left: 35px; }
.tree .root { padding-left: 17px; gap: 7px; }
.item { display: flex; align-items: center; gap: 9px; height: 20px; padding: 0 11px 0 3px; background: #f1f1f1; white-space: nowrap; }
.item span { margin-left: 5px; }
.item .doc-label { margin: 0 -3px 0 3px; }
.root .item { gap: 4px; padding: 0 7px 0 3px; }
.item .chosen { display: flex; align-items: center; gap: 14px; height: 16px; margin-left: 2px; padding: 0 13px 0 3px; background: #979797; color: #fff; font-weight: 700; }
.branch { width: 11px; height: 14px; }
.eye { width: 16px; height: 12px; }
.folder { width: 16px; height: 14px; }

.nav-bar {
  position: absolute;
  bottom: 6px;
  left: 50%;
  display: flex;
  align-items: center;
  gap: 7px;
  height: 24px;
  margin-left: -118px;
  padding: 0 3px 0 2px;
  background: #f1f1f1;
}
.nav-bar button { gap: 4px; }
.nav-bar .tight { gap: 1px; margin-left: -2px; }

.timeline { display: flex; align-items: center; height: 50px; padding: 0 14px 0 10px; border-top: 1px solid #c8c8c8; }
.playback { display: flex; gap: 11px; }
.features { display: flex; flex: 1; align-items: flex-start; gap: 6px; height: 32px; margin-left: 21px; }
.features button { position: relative; flex: none; padding-top: 5px; }
.features button::after { content: ""; position: absolute; top: 24px; left: 9px; width: 24px; height: 7px; border: solid #c8c8c8; border-width: 0 0 2px 2px; }
.features button:nth-of-type(12)::after { width: 2px; }
.marker { width: 12px; height: 32px; margin-left: -9px; }
```
